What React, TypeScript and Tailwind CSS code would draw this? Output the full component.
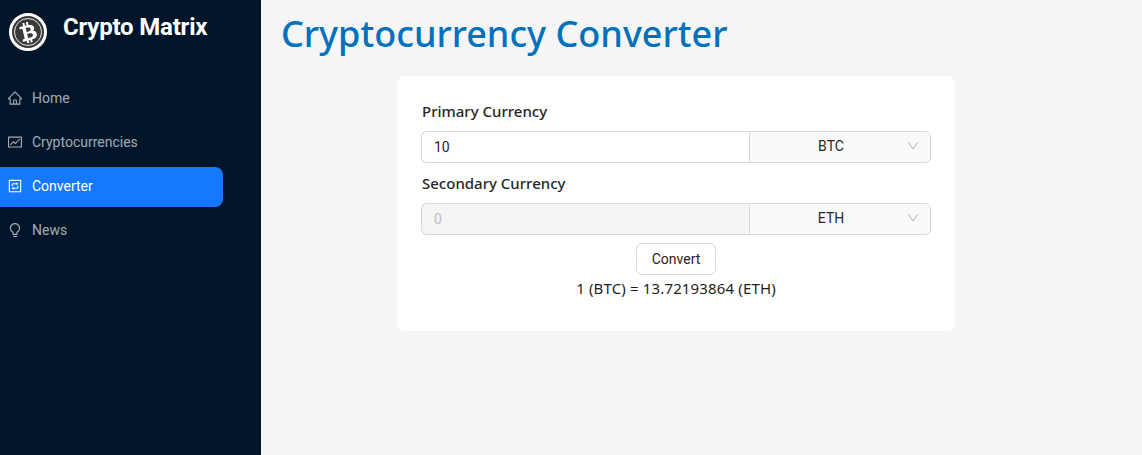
import { AiOutlineHome, AiOutlineFund, AiOutlineInteraction, AiOutlineBulb, AiOutlineDown } from "react-icons/ai";
import { FaBtc } from "react-icons/fa";

const menu = [
  { label: "Home", icon: AiOutlineHome },
  { label: "Cryptocurrencies", icon: AiOutlineFund },
  { label: "Converter", icon: AiOutlineInteraction, active: true },
  { label: "News", icon: AiOutlineBulb },
];

function CurrencyRow({ value, coin, disabled }: { value: string; coin: string; disabled?: boolean }) {
  return (
    <div className="flex h-8 w-full text-sm font-['Roboto',sans-serif]">
      <div
        className={`flex flex-1 items-center rounded-l-md border border-r-0 border-[#d9d9d9] px-3 ${
          disabled ? "bg-[#f5f5f5] text-[#bfbfbf]" : "bg-white text-[#262626]"
        }`}
      >
        {value}
      </div>
      <div className="relative flex w-[182px] items-center justify-center rounded-r-md border border-[#d9d9d9] bg-[#fafafa] pb-[2px] pr-[18px] text-[#262626]">
        {coin}
        <AiOutlineDown className="absolute right-[10px] top-[7px] text-[14px] text-[#bfbfbf]" />
      </div>
    </div>
  );
}

export default function App() {
  return (
    <div className="flex h-screen bg-[#f5f5f5]">
      <aside className="w-[261px] shrink-0 bg-[#001529] font-['Roboto',sans-serif]">
        <div className="flex h-[79px] items-start pl-[9px] pt-[13px]">
          <div className="flex h-[38px] w-[38px] items-center justify-center rounded-full border-[3px] border-white bg-[#3a3a3a]">
            <div className="flex h-[28px] w-[28px] items-center justify-center rounded-full border border-[#e8e8e8] bg-[#3a3a3a]">
              <FaBtc className="-rotate-[14deg] text-[21px] text-white" />
            </div>
          </div>
          <h1 className="ml-4 mt-[-2px] text-2xl font-bold leading-[32px] text-white tracking-[-0.2px]">Crypto Matrix</h1>
        </div>
        <nav className="flex w-[223px] flex-col gap-1">
          {menu.map((item) => (
            <div
              key={item.label}
              className={`flex h-10 items-center gap-[9px] pb-[2px] pl-[7px] text-sm ${
                item.active ? "rounded-r-lg bg-[#1677ff] text-white" : "text-[#ffffffa6]"
              }`}
            >
              <item.icon className="text-[16px]" />
              {item.label}
            </div>
          ))}
        </nav>
      </aside>
      <main className="flex-1 font-['Noto_Sans',sans-serif]">
        <h2 className="mt-[9px] ml-[20px] text-[36px] font-medium leading-[50px] text-[#0071bc]">Cryptocurrency Converter</h2>
        <div className="ml-[136px] mt-[17px] flex h-[255px] w-[558px] flex-col rounded-lg bg-white p-6">
          <label className="mb-[9px] pl-px text-[15px] font-medium leading-[22px] text-[#262626]">Primary Currency</label>
          <CurrencyRow value="10" coin="BTC" />
          <label className="mb-[9px] mt-[9px] pl-px text-[15px] font-medium leading-[22px] text-[#262626]">Secondary Currency</label>
          <CurrencyRow value="0" coin="ETH" disabled />
          <button className="mx-auto mt-2 h-8 w-20 rounded-md border border-[#d9d9d9] bg-white font-['Roboto',sans-serif] text-sm text-[#262626]">
            Convert
          </button>
          <p className="mt-[2px] text-center text-[15px] leading-[22px] tracking-[0.15px] text-[#1f1f1f]">1 (BTC) = 13.72193864 (ETH)</p>
        </div>
      </main>
    </div>
  );
}
